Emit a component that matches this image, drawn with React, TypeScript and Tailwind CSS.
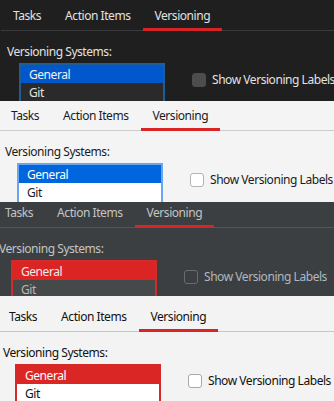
type Theme = {
  bg: string
  text: string
  sep: string
  listBorder: string
  selBg: string
  selText: string
  rowBg: string
  rowText: string
  box: string
  boxText: string
}

const themes: Record<string, Theme> = {
  dark: {
    bg: 'bg-[#1f1f1f]',
    text: 'text-[#e2e2e2]',
    sep: 'border-[#3a3a3a]',
    listBorder: 'border-[#1d5e96]',
    selBg: 'bg-[#0058cc]',
    selText: 'text-[#f0f0f0]',
    rowBg: 'bg-[#2a2a2a]',
    rowText: 'text-[#e2e2e2]',
    box: 'bg-[#4d4d4d] border-[#4d4d4d]',
    boxText: 'text-[#e2e2e2]',
  },
  light: {
    bg: 'bg-[#f4f4f4]',
    text: 'text-[#1b1b1b]',
    sep: 'border-[#cccccc]',
    listBorder: 'border-[#6aa6f0]',
    selBg: 'bg-[#0066dd]',
    selText: 'text-white',
    rowBg: 'bg-white',
    rowText: 'text-[#1b1b1b]',
    box: 'bg-white border-[#b4b4b4]',
    boxText: 'text-[#1b1b1b]',
  },
  darcula: {
    bg: 'bg-[#3c3f41]',
    text: 'text-[#c4c4c4]',
    sep: 'border-[#555555]',
    listBorder: 'border-[#d42a2a]',
    selBg: 'bg-[#db2424]',
    selText: 'text-[#ececec]',
    rowBg: 'bg-[#45494a]',
    rowText: 'text-[#b8b8b8]',
    box: 'bg-transparent border-[#6b6b6b]',
    boxText: 'text-[#b0b8c0]',
  },
  red: {
    bg: 'bg-[#f3f3f3]',
    text: 'text-[#111111]',
    sep: 'border-[#c6c6c6]',
    listBorder: 'border-[#d42a2a]',
    selBg: 'bg-[#db2626]',
    selText: 'text-white',
    rowBg: 'bg-white',
    rowText: 'text-[#111111]',
    box: 'bg-white border-[#a8a8a8]',
    boxText: 'text-[#111111]',
  },
}

function Panel({ theme, height, shift }: { theme: Theme; height: string; shift: string }) {
  const tabs = ['Tasks', 'Action Items', 'Versioning']
  return (
    <div className={`${height} ${theme.bg} overflow-hidden`}>
      <div className={`${shift} w-[360px]`}>
        <div className={`flex h-[31px] ml-px border-b ${theme.sep}`}>
          {tabs.map((t, i) => (
            <div
              key={t}
              className={`h-[31px] -mb-px px-3 pt-[4px] border-b-[3px] leading-[24px] ${theme.text} ${
                i === 2 ? 'border-[#d82424]' : 'border-transparent'
              }`}
            >
              {t}
            </div>
          ))}
        </div>
        <div className={`pl-[7px] mt-[13px] leading-[16px] ${theme.text}`}>Versioning Systems:</div>
        <div className="flex items-start mt-[3px] pl-[19px]">
          <div className={`w-[146px] h-[60px] border-2 ${theme.listBorder} ${theme.rowBg}`}>
            <div className={`h-[18px] pl-2 leading-[19px] ${theme.selBg} ${theme.selText}`}>General</div>
            <div className={`h-[18px] pl-2 leading-[19px] ${theme.rowText}`}>Git</div>
          </div>
          <div className="flex items-center ml-[27px] mt-[9px] gap-[6px]">
            <span className={`w-[14px] h-[14px] rounded-[3px] border ${theme.box}`} />
            <span className={`leading-[16px] whitespace-nowrap ${theme.boxText}`}>Show Versioning Labels</span>
          </div>
        </div>
      </div>
    </div>
  )
}

export default function App() {
  return (
    <div className="w-[334px] h-[401px] overflow-hidden text-[12px] tracking-[-0.45px] font-['Noto_Sans',sans-serif]">
      <Panel theme={themes.dark} height="h-[101px]" shift="mt-0 ml-0" />
      <Panel theme={themes.light} height="h-[101px]" shift="-mt-px -ml-[2px]" />
      <Panel theme={themes.darcula} height="h-[94px]" shift="-mt-[5px] -ml-[8px]" />
      <Panel theme={themes.red} height="h-[105px]" shift="mt-[5px] -ml-[4px]" />
    </div>
  )
}
